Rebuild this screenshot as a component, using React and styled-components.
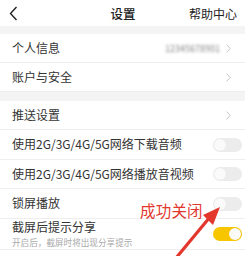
import React from 'react';
import styled, { createGlobalStyle } from 'styled-components';

const Global = createGlobalStyle`
  html, body { margin: 0; padding: 0; background: #fff; }
  body {
    font-family: 'Noto Sans CJK SC', 'Noto Sans', sans-serif;
    -webkit-font-smoothing: antialiased;
  }
`;

const Page = styled.div`
  position: relative;
  width: 245px;
  height: 256px;
  overflow: hidden;
  background: #fff;
`;

const Header = styled.div`
  height: 26px;
  display: grid;
  grid-template-columns: 1fr auto 1fr;
  align-items: center;
  padding: 0 8px 0 9px;
  color: #222;
`;

const Title = styled.div`
  font-size: 12.5px;
  font-weight: 500;
`;

const Help = styled.div`
  justify-self: end;
  font-size: 12px;
`;

const Band = styled.div`
  height: ${(p) => p.h}px;
  background: #f4f4f4;
`;

const Row = styled.div`
  height: ${(p) => p.h || 29}px;
  box-sizing: border-box;
  display: flex;
  align-items: center;
  justify-content: space-between;
  padding: 0 3px 0 12px;
  border-bottom: 1px solid #eeeeee;
`;

const Label = styled.div`
  font-size: 12px;
  color: #333;
  line-height: 1.2;
`;

const Sub = styled.div`
  font-size: 8.6px;
  color: #aaa;
  margin-top: 1px;
`;

const Right = styled.div`
  display: flex;
  align-items: center;
  gap: 6px;
  padding-right: 11px;
`;

const Blur = styled.div`
  font-size: 9px;
  color: transparent;
  text-shadow: 0 0 3px rgba(120, 120, 120, 0.9);
`;

const Chevron = styled.svg`
  width: 5px;
  height: 9px;
`;

const Toggle = styled.div`
  width: 29px;
  height: 14px;
  border-radius: 7px;
  background: ${(p) => (p.on ? '#f7c600' : '#ececec')};
  position: relative;
  &::after {
    content: '';
    position: absolute;
    top: 1px;
    ${(p) => (p.on ? 'right: 1px;' : 'left: 1px;')}
    width: 12px;
    height: 12px;
    border-radius: 50%;
    background: #fafafa;
    box-shadow: 0 0 1px rgba(0, 0, 0, 0.08);
  }
`;

const Note = styled.div`
  position: absolute;
  left: 140px;
  top: 199px;
  font-size: 15.5px;
  color: #e3372e;
  letter-spacing: 0.2px;
`;

const Arrow = styled.svg`
  position: absolute;
  left: 0;
  top: 0;
  width: 245px;
  height: 256px;
  pointer-events: none;
`;

const Back = () => (
  <svg width="9" height="15" viewBox="0 0 9 15">
    <path d="M7.5 1 L1.5 7.5 L7.5 14" fill="none" stroke="#222" strokeWidth="1.4" />
  </svg>
);

const More = () => (
  <Chevron viewBox="0 0 5 9">
    <path d="M0.6 0.6 L4.2 4.5 L0.6 8.4" fill="none" stroke="#bdbdbd" strokeWidth="0.9" />
  </Chevron>
);

export default function App() {
  return (
    <Page>
      <Global />
      <Header>
        <Back />
        <Title>设置</Title>
        <Help>帮助中心</Help>
      </Header>
      <Band h={8} />
      <Row>
        <Label>个人信息</Label>
        <Right>
          <Blur>12345678901</Blur>
          <More />
        </Right>
      </Row>
      <Row>
        <Label>账户与安全</Label>
        <Right>
          <More />
        </Right>
      </Row>
      <Band h={9} />
      <Row>
        <Label>推送设置</Label>
        <Right>
          <More />
        </Right>
      </Row>
      <Row h={30}>
        <Label>使用2G/3G/4G/5G网络下载音频</Label>
        <Toggle />
      </Row>
      <Row>
        <Label>使用2G/3G/4G/5G网络播放音视频</Label>
        <Toggle />
      </Row>
      <Row h={30}>
        <Label>锁屏播放</Label>
        <Toggle />
      </Row>
      <Row h={31}>
        <div>
          <Label>截屏后提示分享</Label>
          <Sub>开启后，截屏时将出现分享提示</Sub>
        </div>
        <Toggle on />
      </Row>
      <Note>成功关闭</Note>
      <Arrow viewBox="0 0 245 256">
        <line x1="176" y1="258" x2="210" y2="217" stroke="#e3372e" strokeWidth="3.2" strokeLinecap="round" />
        <polygon points="220,207 213,225 203,215" fill="#e3372e" />
      </Arrow>
    </Page>
  );
}
